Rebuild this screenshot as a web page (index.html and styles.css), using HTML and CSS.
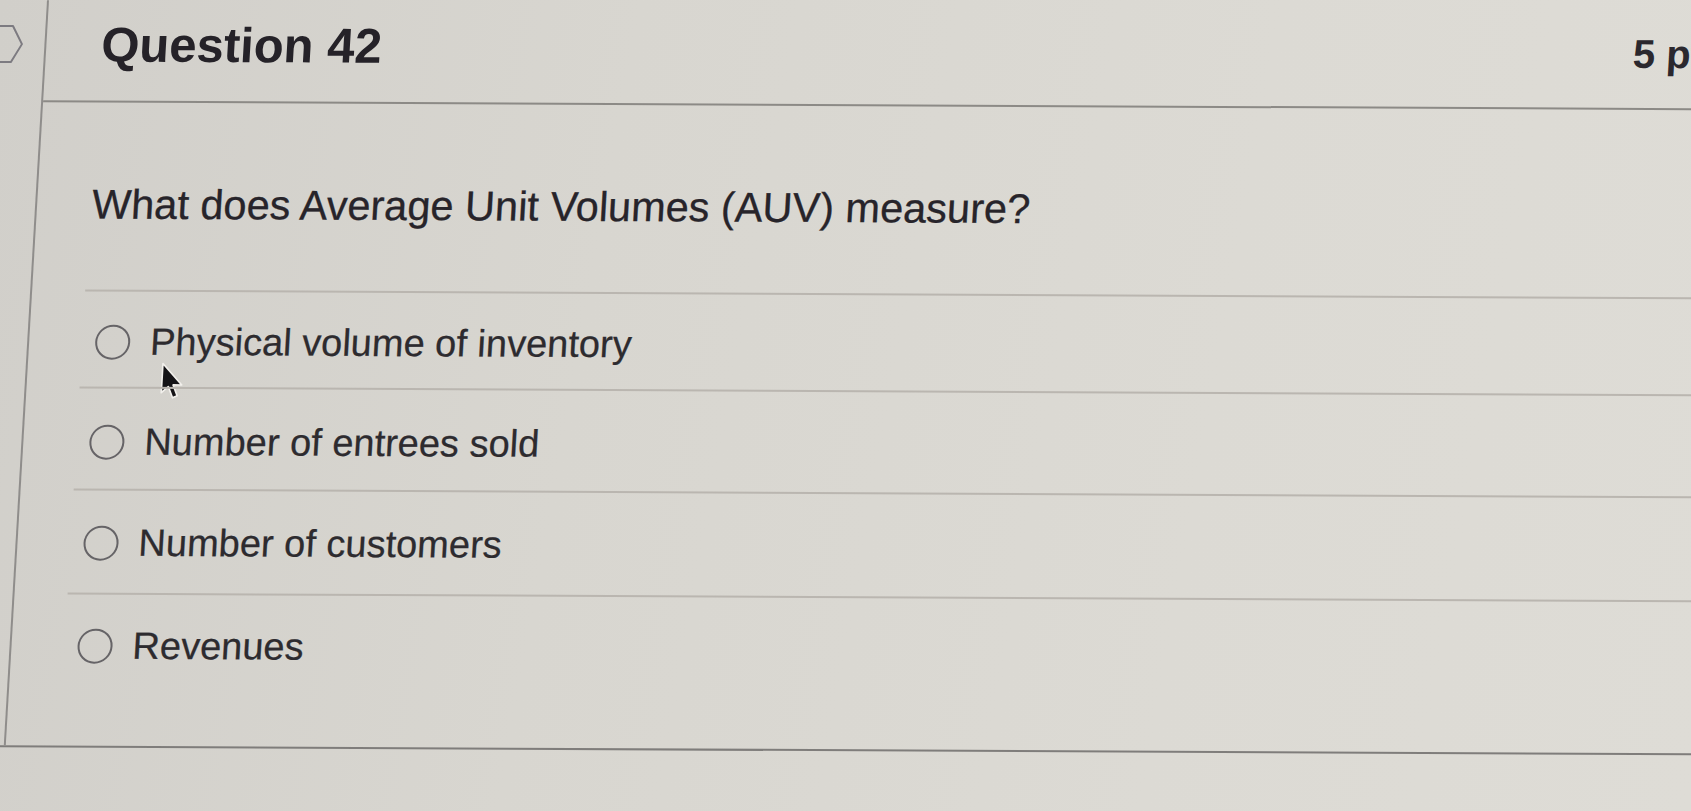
FILE: index.html
```html
<!DOCTYPE html>
<html lang="en">
<head>
<meta charset="utf-8">
<title>Question 42</title>
<link rel="stylesheet" href="styles.css">
</head>
<body>
<div class="photo">
  <div class="top">
    <aside class="sidebar">
      <svg class="tab-icon" width="30" height="38" viewBox="0 0 30 38" aria-hidden="true">
        <path d="M0 1 H18.5 L28.5 19 L18.5 37 H0" fill="none" stroke="#7d7b81" stroke-width="2" stroke-linejoin="round"/>
      </svg>
    </aside>
    <section class="panel">
      <header class="qheader">
        <h2 class="qtitle">Question 42</h2>
        <span class="qpoints">5 pts</span>
      </header>
      <div class="qbody">
        <p class="qtext">What does Average Unit Volumes (AUV) measure?</p>
        <div class="answers">
          <label class="answer">
            <span class="radio"></span>
            <span class="answer-text">Physical volume of inventory</span>
            <svg class="cursor" width="24" height="40" viewBox="0 0 14 24" aria-hidden="true">
              <path d="M1 1 L1 18.5 L5 14.8 L7.9 21.5 L10.6 20.3 L7.8 13.8 L13 13.8 Z" fill="#151417" stroke="#f2f0ec" stroke-width="1" stroke-linejoin="round"/>
            </svg>
          </label>
          <label class="answer">
            <span class="radio"></span>
            <span class="answer-text">Number of entrees sold</span>
          </label>
          <label class="answer">
            <span class="radio"></span>
            <span class="answer-text">Number of customers</span>
          </label>
          <label class="answer">
            <span class="radio"></span>
            <span class="answer-text">Revenues</span>
          </label>
        </div>
      </div>
    </section>
  </div>
  <div class="below"></div>
</div>
</body>
</html>
```

FILE: styles.css
```css
html, body {
  margin: 0;
  padding: 0;
}

body {
  width: 1691px;
  height: 811px;
  overflow: hidden;
  background: linear-gradient(100deg, #d1cfca 0%, #d8d6d0 35%, #dcdad4 70%, #dedcd6 100%);
  font-family: "Liberation Sans", Arial, Helvetica, sans-serif;
  color: #2c2a2e;
}

.photo {
  width: 1800px;
  height: 840px;
  transform-origin: 0 0;
  transform: matrix(1, 0.0048, -0.058, 1, 0, 0);
}

.top {
  display: flex;
  height: 745px;
  border-bottom: 2px solid #7f7d7b;
}

.sidebar {
  width: 47px;
  flex: none;
  padding-top: 25px;
  box-sizing: border-box;
}

.tab-icon {
  display: block;
  margin-left: -4px;
}

.panel {
  flex: 1;
  border-left: 2px solid #8f8d8b;
  min-width: 0;
}

.qheader {
  display: flex;
  align-items: baseline;
  justify-content: space-between;
  padding: 16px 71px 25px 55px;
  border-bottom: 2px solid #8c8a86;
}

.qtitle {
  margin: 0;
  font-size: 49px;
  line-height: 56px;
  font-weight: bold;
  color: #252228;
}

.qpoints {
  font-size: 40px;
  line-height: 56px;
  font-weight: bold;
  color: #2b282e;
  position: relative;
  top: -1px;
}

.qbody {
  padding-left: 53px;
}

.qtext {
  margin: 0 0 61px 2px;
  padding-top: 78px;
  font-size: 41.5px;
  line-height: 48px;
  color: #27242a;
  -webkit-text-stroke: 0.3px #27242a;
}

.answers {
  display: flex;
  flex-direction: column;
}

.answer {
  position: relative;
  display: flex;
  align-items: flex-start;
  box-sizing: border-box;
  padding-left: 13px;
  border-top: 2px solid #bab6b0;
}

.answer:nth-child(1) {
  height: 97px;
  padding-top: 28px;
}

.answer:nth-child(2) {
  height: 102px;
  padding-top: 31px;
}

.answer:nth-child(3) {
  height: 104px;
  padding-top: 30px;
}

.answer:nth-child(4) {
  padding-top: 29px;
}

.radio {
  flex: none;
  width: 35px;
  height: 35px;
  box-sizing: border-box;
  border: 2px solid #666467;
  border-radius: 50%;
  margin-top: 5px;
}

.answer-text {
  margin-left: 20px;
  font-size: 38px;
  line-height: 44px;
  color: #2d2b2f;
  -webkit-text-stroke: 0.25px #2d2b2f;
}

.cursor {
  position: absolute;
  left: 80px;
  top: 70px;
}

.below {
  height: 90px;
}
```
